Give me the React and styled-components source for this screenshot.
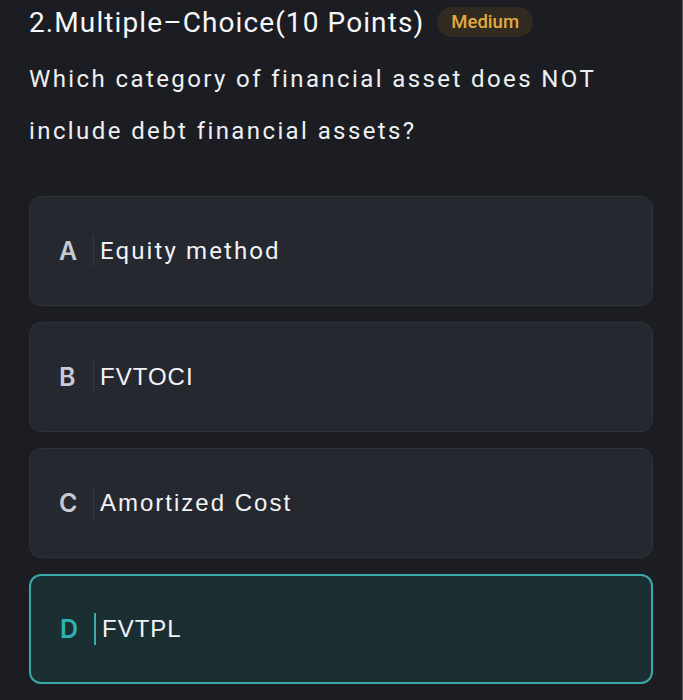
import React, { useState } from "react";
import styled, { createGlobalStyle } from "styled-components";

const GlobalStyle = createGlobalStyle`
  html, body {
    margin: 0;
    padding: 0;
    background: #1c1d22;
  }
  body {
    font-family: Roboto, "Liberation Sans", sans-serif;
    color: #f2f3f5;
  }
`;

const Page = styled.div`
  width: 683px;
  min-height: 700px;
  box-sizing: border-box;
  padding: 0 29px;
  background: #1c1d22;
  border-right: 1px solid #5a5b60;
`;

const Header = styled.div`
  display: flex;
  align-items: center;
  height: 44px;
  gap: 13px;
`;

const Title = styled.h1`
  margin: 0;
  font-size: 28px;
  font-weight: 400;
  color: #f6f7f9;
  letter-spacing: 1.1px;
`;

const Badge = styled.span`
  display: inline-flex;
  align-items: center;
  height: 30px;
  padding: 0 14px;
  border-radius: 15px;
  background: #302a20;
  color: #e2aa3c;
  font-size: 18.5px;
  font-weight: 500;
`;

const Question = styled.p`
  margin: 9px 0 0;
  font-size: 24px;
  line-height: 52px;
  letter-spacing: 2.4px;
  color: #eef0f3;
`;

const Options = styled.div`
  display: flex;
  flex-direction: column;
  gap: 16px;
  margin-top: 39px;
`;

const Option = styled.button`
  display: flex;
  align-items: center;
  height: 110px;
  padding: 0 29px;
  box-sizing: border-box;
  border-radius: 12px;
  border: ${(p) => (p.$selected ? "2px solid #3aa9ab" : "1px solid #30323a")};
  background: ${(p) => (p.$selected ? "#1b2e32" : "#262830")};
  cursor: pointer;
  text-align: left;
  font-family: inherit;
`;

const Letter = styled.span`
  width: 20px;
  font-size: 25px;
  font-weight: 600;
  font-family: Inter, "Liberation Sans", sans-serif;
  color: ${(p) => (p.$selected ? "#2db3b4" : "#c8cbd4")};
`;

const Divider = styled.span`
  width: ${(p) => (p.$selected ? "2px" : "1px")};
  height: 32px;
  margin: 0 6px 0 14px;
  background: ${(p) => (p.$selected ? "#36aeb0" : "#363942")};
`;

const Label = styled.span`
  font-size: 24px;
  letter-spacing: ${(p) => p.$spacing}px;
  font-family: ${(p) =>
    p.$wide ? "Roboto, sans-serif" : '"Liberation Sans", Arial, sans-serif'};
  color: #f2f3f6;
`;

const choices = [
  { key: "A", text: "Equity method", wide: true, spacing: 2.1 },
  { key: "B", text: "FVTOCI", spacing: 1 },
  { key: "C", text: "Amortized Cost", spacing: 2 },
  { key: "D", text: "FVTPL", spacing: 1 },
];

const App = () => {
  const [picked, setPicked] = useState("D");

  return (
    <Page>
      <GlobalStyle />
      <Header>
        <Title>2.Multiple–Choice(10 Points)</Title>
        <Badge>Medium</Badge>
      </Header>
      <Question>
        Which category of financial asset does NOT include debt financial
        assets?
      </Question>
      <Options>
        {choices.map((c) => {
          const sel = picked === c.key;
          return (
            <Option key={c.key} $selected={sel} onClick={() => setPicked(c.key)}>
              <Letter $selected={sel}>{c.key}</Letter>
              <Divider $selected={sel} />
              <Label $wide={c.wide} $spacing={c.spacing}>
                {c.text}
              </Label>
            </Option>
          );
        })}
      </Options>
    </Page>
  );
};

export default App;
